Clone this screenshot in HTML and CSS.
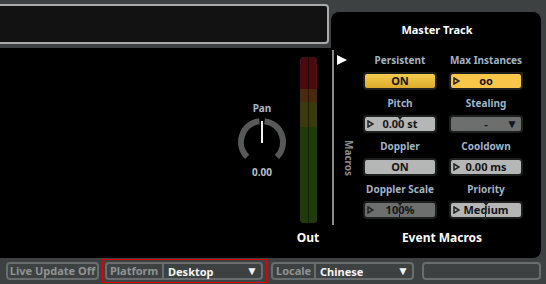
FILE: index.html
```html
<!DOCTYPE html>
<html lang="en">
<head>
    <meta charset="UTF-8">
    <title>Event Editor - Master Track</title>
    <link rel="stylesheet" href="styles.css">
</head>
<body>
    <div class="workspace">
        <div class="left-col">
            <div class="top-strip">
                <div class="timeline-box"></div>
            </div>
            <div class="stage">
                <div class="pan">
                    <div class="pan-label">Pan</div>
                    <svg class="knob" width="50" height="50" viewBox="0 0 50 50">
                        <path d="M10.15 41.85 A21 21 0 0 1 22.44 6.16" fill="none" stroke="#575858" stroke-width="6"/>
                        <path d="M27.56 6.16 A21 21 0 0 1 39.85 41.85" fill="none" stroke="#575858" stroke-width="6"/>
                        <line x1="25" y1="6" x2="25" y2="28" stroke="#f0f0f0" stroke-width="2"/>
                    </svg>
                    <div class="pan-value">0.00</div>
                </div>
                <div class="out">
                    <div class="meter">
                        <div class="channel"></div>
                        <div class="channel"></div>
                    </div>
                    <div class="out-label">Out</div>
                </div>
            </div>
        </div>

        <div class="panel">
            <div class="side">
                <div class="rail">
                    <svg class="rail-arrow" width="10" height="10" viewBox="0 0 10 10">
                        <polygon points="0,0 10,5 0,10" fill="#ffffff"/>
                    </svg>
                    <div class="rail-text">Macros</div>
                </div>
            </div>
            <div class="master">
                <div class="title">Master Track</div>
                <div class="props">
                    <div class="prop">
                        <div class="prop-label">Persistent</div>
                        <div class="ctl on-yellow">ON</div>
                    </div>
                    <div class="prop">
                        <div class="prop-label">Max Instances</div>
                        <div class="ctl flat-yellow clipped">
                            <svg class="play" width="7" height="8" viewBox="0 0 7 8"><polygon points="1,1 6,4 1,7" fill="none" stroke="#262626" stroke-width="1.5"/></svg>oo
                        </div>
                    </div>
                    <div class="prop">
                        <div class="prop-label">Pitch</div>
                        <div class="ctl light">
                            <svg class="play" width="7" height="8" viewBox="0 0 7 8"><polygon points="1,1 6,4 1,7" fill="none" stroke="#262626" stroke-width="1.5"/></svg><span class="notch"></span>0.00 st
                        </div>
                    </div>
                    <div class="prop">
                        <div class="prop-label">Stealing</div>
                        <div class="ctl dark">-<span class="drop">&#9660;</span></div>
                    </div>
                    <div class="prop">
                        <div class="prop-label">Doppler</div>
                        <div class="ctl light">ON</div>
                    </div>
                    <div class="prop">
                        <div class="prop-label">Cooldown</div>
                        <div class="ctl light">
                            <svg class="play" width="7" height="8" viewBox="0 0 7 8"><polygon points="1,1 6,4 1,7" fill="none" stroke="#262626" stroke-width="1.5"/></svg>0.00 ms
                        </div>
                    </div>
                    <div class="prop">
                        <div class="prop-label">Doppler Scale</div>
                        <div class="ctl dark">
                            <svg class="play" width="7" height="8" viewBox="0 0 7 8"><polygon points="1,1 6,4 1,7" fill="none" stroke="#262626" stroke-width="1.5"/></svg><span class="notch"></span><span class="tick"></span>100%
                        </div>
                    </div>
                    <div class="prop">
                        <div class="prop-label">Priority</div>
                        <div class="ctl light">
                            <svg class="play" width="7" height="8" viewBox="0 0 7 8"><polygon points="1,1 6,4 1,7" fill="none" stroke="#262626" stroke-width="1.5"/></svg><span class="notch"></span><span class="tick"></span>Medium
                        </div>
                    </div>
                </div>
                <div class="footer-title">Event Macros</div>
            </div>
        </div>
    </div>

    <div class="toolbar">
        <div class="tool-btn">Live Update Off</div>
        <div class="highlight">
            <div class="select platform">
                <span class="select-label">Platform</span>
                <span class="select-value">Desktop</span>
                <span class="select-arrow">&#9660;</span>
            </div>
        </div>
        <div class="select locale">
            <span class="select-label">Locale</span>
            <span class="select-value">Chinese</span>
            <span class="select-arrow">&#9660;</span>
        </div>
        <div class="search-box"></div>
    </div>
</body>
</html>
```

FILE: styles.css
```css
body {
    margin: 0;
    padding: 0;
    width: 546px;
    height: 284px;
    overflow: hidden;
    background-color: #3e4141;
    font-family: "Noto Sans", "Open Sans", sans-serif;
    font-weight: bold;
}
.workspace {
    display: flex;
    height: 258px;
}
.left-col {
    width: 331px;
    display: flex;
    flex-direction: column;
}
.top-strip {
    height: 48px;
    padding-top: 4px;
    box-sizing: border-box;
}
.timeline-box {
    margin-left: -10px;
    width: 339px;
    height: 40px;
    box-sizing: border-box;
    border: 2px solid #a9abab;
    border-radius: 4px;
    background-color: #121212;
}
.stage {
    flex: 1;
    background-color: #000;
    display: flex;
    justify-content: flex-end;
    padding-right: 11px;
}
.pan {
    width: 60px;
    display: flex;
    flex-direction: column;
    align-items: center;
    padding-top: 53px;
    margin-right: 4px;
}
.pan-label {
    font-size: 10px;
    line-height: 14px;
    color: #a6b8c6;
}
.knob {
    display: block;
}
.pan-value {
    font-size: 10px;
    line-height: 14px;
    color: #b7c2ca;
}
.out {
    width: 24px;
    display: flex;
    flex-direction: column;
    align-items: center;
    padding-top: 9px;
}
.meter {
    width: 17px;
    height: 166px;
    display: flex;
    border-radius: 3px;
    overflow: hidden;
    background: linear-gradient(to bottom, #4a0b10 0, #4a0b10 32px, #4a2a0f 32px, #4a2a0f 45px, #3a3a0e 45px, #3a3a0e 70px, #213a0b 70px);
}
.channel {
    flex: 1;
}
.channel + .channel {
    border-left: 1px solid rgba(0,0,0,0.45);
}
.out-label {
    margin-top: 7px;
    font-size: 12px;
    line-height: 16px;
    color: #ffffff;
}
.panel {
    margin-top: 12px;
    width: 210px;
    background-color: #000;
    border-radius: 8px 8px 8px 0;
    display: flex;
}
.side {
    width: 24px;
}
.rail {
    margin-top: 38px;
    margin-left: 1px;
    height: 175px;
    border-left: 2px solid #8a8c8c;
    display: flex;
    flex-direction: column;
}
.rail-arrow {
    display: block;
    margin-top: 5px;
    margin-left: 3px;
}
.rail-text {
    writing-mode: vertical-rl;
    margin-top: 75px;
    margin-left: 1px;
    font-size: 10px;
    line-height: 12px;
    color: #8e9090;
}
.master {
    flex: 1;
    display: flex;
    flex-direction: column;
}
.title {
    margin-top: 10px;
    padding-right: 22px;
    text-align: center;
    font-size: 11px;
    line-height: 16px;
    color: #ffffff;
}
.props {
    margin-top: 16px;
    padding-left: 2px;
    display: grid;
    grid-template-columns: 86px 86px;
    row-gap: 7px;
}
.prop {
    display: flex;
    flex-direction: column;
    align-items: center;
}
.prop-label {
    font-size: 10px;
    line-height: 12px;
    height: 12px;
    margin-bottom: 6px;
    color: #a0b4c6;
    white-space: nowrap;
}
.ctl {
    position: relative;
    width: 74px;
    height: 18px;
    box-sizing: border-box;
    border: 2px solid #1e1f1f;
    border-radius: 4px;
    display: flex;
    align-items: center;
    justify-content: center;
    font-size: 11px;
    line-height: 14px;
    color: #161616;
}
.on-yellow {
    background: linear-gradient(to bottom, #f4cd4e, #dcab2c);
}
.flat-yellow {
    background-color: #fac64a;
}
.clipped::after {
    content: "";
    position: absolute;
    top: -2px;
    right: -2px;
    border-top: 5px solid #1e1f1f;
    border-left: 5px solid transparent;
}
.light {
    background-color: #b5b6b6;
}
.dark {
    background-color: #6d6e6e;
}
.play {
    position: absolute;
    left: 2px;
    top: 3px;
}
.notch {
    position: absolute;
    top: -1px;
    left: 32px;
    border-top: 4px solid #1e1f1f;
    border-left: 3px solid transparent;
    border-right: 3px solid transparent;
}
.tick {
    position: absolute;
    bottom: 0;
    left: 34px;
    width: 1px;
    height: 3px;
    background-color: #1e1f1f;
}
.drop {
    position: absolute;
    right: 3px;
    top: 0;
    font-size: 12px;
    color: #151515;
}
.footer-title {
    margin-top: 11px;
    padding-right: 12px;
    text-align: center;
    font-size: 12px;
    line-height: 16px;
    color: #ffffff;
}
.toolbar {
    height: 26px;
    display: flex;
    align-items: center;
    padding-left: 6px;
}
.tool-btn {
    width: 93px;
    height: 18px;
    box-sizing: border-box;
    border: 2px solid #6a6d6d;
    border-radius: 4px;
    font-size: 11px;
    line-height: 14px;
    color: #8f9393;
    text-align: center;
    white-space: nowrap;
}
.highlight {
    margin-left: 3px;
    width: 165px;
    height: 24px;
    box-sizing: border-box;
    border: 1px solid #e00000;
    padding: 2px 3px 2px 2px;
}
.select {
    height: 18px;
    box-sizing: border-box;
    border: 2px solid #6a6d6d;
    border-radius: 4px;
    display: flex;
    align-items: center;
    font-size: 11px;
    position: relative;
}
.platform {
    width: 158px;
}
.locale {
    margin-left: 4px;
    width: 143px;
}
.select-label {
    color: #8f9393;
    padding: 0 4px 0 3px;
    border-right: 2px solid #6a6d6d;
    line-height: 14px;
}
.platform .select-label {
    width: 48px;
}
.locale .select-label {
    width: 34px;
}
.select-value {
    color: #f4f4f4;
    padding-left: 4px;
    flex: 1;
}
.select-arrow {
    color: #f4f4f4;
    font-size: 12px;
    line-height: 14px;
    padding-right: 3px;
}
.search-box {
    margin-left: 8px;
    width: 119px;
    height: 18px;
    box-sizing: border-box;
    border: 2px solid #6a6d6d;
    border-radius: 4px;
}
```
